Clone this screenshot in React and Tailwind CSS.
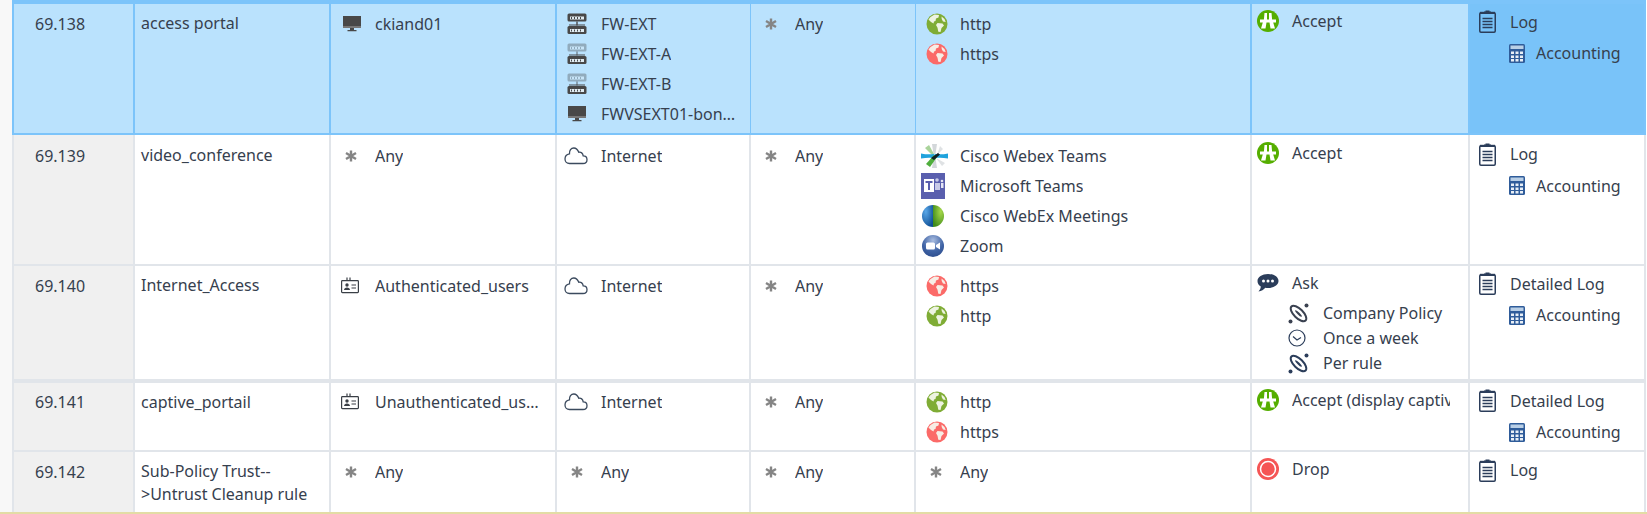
import React from "react";

const Monitor = () => (
  <svg width="20" height="18" viewBox="0 0 20 18">
    <path d="M1 1h18v10H1z" fill="#484848" />
    <path d="M1 11h18v2H1z" fill="#777" />
    <path d="M8 13h4v2H8zM5.500 15h9v1.200h-9z" fill="#484848" />
  </svg>
);
const GwBox = ({ y, fade }) => (
  <g opacity={fade ? 0.35 : 1}>
    <rect x="0.500" y={y} width="19" height="8" rx="1.500" fill="#484848" />
    <rect x="3" y={y + 3} width="14" height="3" fill="#dfeaf0" />
    <path d={`M4 ${y + 3.5}h1v2h-1zM7 ${y + 3.5}h1v2h-1zM10 ${y + 3.5}h1v2h-1zM13 ${y + 3.5}h1v2h-1z`} fill="#484848" />
  </g>
);
const Gateway = ({ fade }) => (
  <svg width="20" height="22" viewBox="0 0 20 22">
    <GwBox y={0.5} fade={fade} />
    <path d="M10 8.500v4" stroke="#484848" strokeWidth="1.400" opacity={fade ? 0.6 : 1} />
    <path d="M2 12h16" stroke="#484848" strokeWidth="1" />
    <GwBox y={13} />
  </svg>
);
const Star = () => (
  <svg width="12" height="12" viewBox="0 0 12 12">
    <path d="M6 0.500v11M1 3l10 6M11 3L1 9" stroke="#858585" strokeWidth="2.400" />
  </svg>
);
const Globe = ({ color }) => (
  <svg width="22" height="22" viewBox="0 0 22 22">
    <circle cx="11" cy="11" r="10.500" fill={color} />
    <path d="M4.500 4l4-2.500 4.500.5-.5 2.500-2.500 1-.5 2.500-1.500.5-.5 2-2.500-1.500-2.500-2.500zM11.500 10l5 .5 1.500 2-2.500 2.500-1 4-2.200-.2-.8-4-1.500-2.800zM15.500 3.500l3 2.500 1.200 3-2.700-.5-1.300-2.500z" fill="#f6f8f0" opacity="0.92" />
  </svg>
);
const Accept = () => (
  <svg width="22" height="22" viewBox="0 0 22 22">
    <circle cx="11" cy="11" r="11" fill="#55ae00" />
    <path d="M7.500 3h2.500v6.500h2V3h2.500l.6 6.500H19v3h-2.800l1.800 6h-4.500l-1-6h-3l-1 6H4l1.800-6H3v-3h3.900z" fill="#fff" />
  </svg>
);
const Drop = () => (
  <svg width="22" height="22" viewBox="0 0 22 22">
    <circle cx="11" cy="11" r="11" fill="#f55555" />
    <circle cx="11" cy="11" r="7.500" fill="none" stroke="#fff" strokeWidth="1.500" />
    <circle cx="11" cy="11" r="5.500" fill="#f55555" />
  </svg>
);
const Clip = () => (
  <svg width="17" height="23" viewBox="0 0 17 23">
    <rect x="0.750" y="2.750" width="15.500" height="19.500" rx="1.200" fill="none" stroke="#2b3d5a" strokeWidth="1.500" />
    <path d="M5 3.500V1.500h1.500V.500h4v1h1.500v2z" fill="#2b3d5a" />
    <path d="M1 1.800h15v2.200H1z" fill="#2b3d5a" />
    <path d="M3.500 8.500h10M3.500 11.500h10M3.500 14.500h10M3.500 17.500h10" stroke="#2b3d5a" strokeWidth="1.300" />
  </svg>
);
const Calc = () => (
  <svg width="16" height="19" viewBox="0 0 16 19">
    <rect x="0" y="0" width="16" height="19" rx="1.500" fill="#2f5c9a" />
    <rect x="1.500" y="1.500" width="13" height="3.500" fill="#b9cfe6" />
    <path d="M2 7.500h3v2.500H2zM6.500 7.500h3v2.500h-3zM11 7.500h3v2.500h-3zM2 11.500h3V14H2zM6.500 11.500h3V14h-3zM11 11.500h3V14h-3zM2 15h3v2.500H2zM6.500 15h3v2.500h-3zM11 15h3v2.500h-3z" fill="#e9eff6" />
  </svg>
);
const Cloud = () => (
  <svg width="24" height="18" viewBox="0 0 24 18">
    <path d="M5.500 16.500H19c2.500 0 4-1.600 4-3.800 0-2.300-1.700-3.800-3.800-3.800-.3-2.800-2.300-4.100-4.400-3.600C13.800 2.800 12 1 9.800 1 7 1 5.200 3.500 5.500 6.800 3 7.200 1 9.300 1 12c0 2.600 2 4.500 4.500 4.500z" fill="none" stroke="#3b4a5e" strokeWidth="1.300" />
  </svg>
);
const Card = () => (
  <svg width="18" height="17" viewBox="0 0 18 17">
    <rect x="0.600" y="3.600" width="16.800" height="12" rx="0.800" fill="none" stroke="#3a3f46" strokeWidth="1.200" />
    <path d="M6 .5v2.500M9 .5v2.500" stroke="#3a3f46" strokeWidth="1.200" />
    <circle cx="6" cy="8" r="1.700" fill="#3a3f46" />
    <path d="M3 13c0-1.800 1.300-2.600 3-2.600s3 .8 3 2.600z" fill="#3a3f46" />
    <path d="M10.500 8h4.500M10.500 11h4.500" stroke="#3a3f46" strokeWidth="1.200" />
  </svg>
);
const Webex = () => (
  <svg width="27" height="26" viewBox="0 0 27 26">
    <path d="M11 1h5l-1.500 10h-2zM11 25h5l-1.500-10h-2z" fill="#d3d7da" />
    <path d="M19 3l3 3-6 6zM24 20l-3 3-6-8z" fill="#dfe2e4" />
    <path d="M4 5l4-3 5 9-1 2z" fill="#a9d39a" />
    <path d="M0 10.500c5 1 9 1 13 .5l1 2-1 2c-4-.5-8-.5-13 .5zM27 10.500c-5 1-9 1-13 .5l-1 2 1 2c4-.5 8-.5 13 .5z" fill="#1fa3dd" />
    <path d="M5 21l8-9 3 2-7 10z" fill="#4fae3c" />
    <path d="M10 15l7-5 2 1.500-6 5.500z" fill="#0f2024" />
  </svg>
);
const Teams = () => (
  <svg width="24" height="26" viewBox="0 0 24 26">
    <rect width="24" height="26" fill="#5a5fae" />
    <rect x="3" y="6" width="10" height="13" fill="#fff" />
    <path d="M4.500 8h7v2H9v7H7v-7H4.500z" fill="#5a5fae" />
    <circle cx="16" cy="7" r="1.800" fill="#c9cbe8" />
    <path d="M14 10h5v7h-5z" fill="#c9cbe8" />
    <circle cx="21" cy="8" r="1.300" fill="#e4e5f4" />
    <path d="M20 10h2.500v5H20z" fill="#e4e5f4" />
  </svg>
);
const Meetings = () => (
  <svg width="24" height="24" viewBox="0 0 24 24">
    <defs>
      <radialGradient id="mb" cx="35%" cy="30%" r="80%">
        <stop offset="0" stopColor="#5aa8e8" />
        <stop offset="1" stopColor="#0d4d94" />
      </radialGradient>
      <radialGradient id="mg" cx="70%" cy="30%" r="80%">
        <stop offset="0" stopColor="#a6d84a" />
        <stop offset="1" stopColor="#3f8a1a" />
      </radialGradient>
    </defs>
    <path d="M12 1a11 11 0 0 0 0 22z" fill="url(#mb)" />
    <path d="M12 1a11 11 0 0 1 0 22z" fill="url(#mg)" />
  </svg>
);
const Zoom = () => (
  <svg width="24" height="24" viewBox="0 0 24 24">
    <defs>
      <radialGradient id="zb" cx="50%" cy="25%" r="80%">
        <stop offset="0" stopColor="#a9bde0" />
        <stop offset="0.600" stopColor="#3f63a5" />
        <stop offset="1" stopColor="#2c4c8c" />
      </radialGradient>
    </defs>
    <circle cx="12" cy="12" r="11" fill="url(#zb)" />
    <rect x="5" y="8.500" width="9" height="7" rx="1.500" fill="#fff" />
    <path d="M15 11l4-2.500v7L15 13z" fill="#fff" />
  </svg>
);
const Bubble = () => (
  <svg width="22" height="20" viewBox="0 0 22 20">
    <path d="M11 1c5.800 0 10.500 3 10.500 7s-4.700 7-10.500 7c-1 0-1.800-.1-2.700-.3C6.800 16.500 4.500 18 1.500 18.500c1.300-1.300 2.200-3 2.300-4.900C1.700 12.300.5 10.300.5 8 .5 4 5.200 1 11 1z" fill="#2b3d5a" />
    <circle cx="6.500" cy="8" r="1.500" fill="#fff" />
    <circle cx="11" cy="8" r="1.500" fill="#fff" />
    <circle cx="15.500" cy="8" r="1.500" fill="#fff" />
  </svg>
);
const Orbit = ({ c = "#3a4150" }) => (
  <svg width="21" height="21" viewBox="0 0 21 21">
    <ellipse cx="10.500" cy="10.500" rx="10" ry="4.600" transform="rotate(45 10.500 10.500)" fill="none" stroke={c} strokeWidth="2" />
    <ellipse cx="10.500" cy="10.500" rx="4.500" ry="1.200" transform="rotate(45 10.500 10.500)" fill={c} />
    <circle cx="18.500" cy="2.500" r="2" fill={c} />
    <circle cx="2.500" cy="18.500" r="2" fill={c} />
  </svg>
);
const Clock = () => (
  <svg width="18" height="18" viewBox="0 0 18 18">
    <circle cx="9" cy="9" r="8" fill="none" stroke="#2b3d5a" strokeWidth="1.200" />
    <path d="M5 7.500L9 11l4-2.500" fill="none" stroke="#2b3d5a" strokeWidth="1.200" />
  </svg>
);

const Line = ({ icon, children, pad = "pl-[10px]", icw = "w-[34px]" }) => (
  <div className={`flex items-center h-[30px] ${pad} pr-2 min-w-0`}>
    <span className={`${icw} shrink-0 flex items-center`}>{icon}</span>
    <span className="truncate min-w-0">{children}</span>
  </div>
);
const Any = () => <Line icon={<span className="pl-[4px] flex"><Star /></span>}>Any</Line>;
const Sv = ({ icon, children }) => <Line icon={icon}>{children}</Line>;
const Wide = ({ icon, children }) => (
  <Line icon={icon} pad="pl-[5px]" icw="w-[39px]">{children}</Line>
);
const Act = ({ icon, children, clip }) => (
  <div className="flex items-center h-[30px] pl-[5px]">
    <span className="w-[35px] shrink-0 flex items-center">{icon}</span>
    <span className={clip ? "w-[158px] overflow-hidden whitespace-nowrap" : "whitespace-nowrap"}>{children}</span>
  </div>
);
const Sub = ({ icon, children }) => (
  <div className="flex items-center h-[25px] pl-[36px]">
    <span className="w-[35px] shrink-0 flex items-center">{icon}</span>
    <span className="whitespace-nowrap">{children}</span>
  </div>
);
const Track = ({ detailed, acct }) => (
  <div className="pt-[3px] -mt-[5px]">
    <div className="flex items-center h-[30px] pl-[9px]">
      <span className="w-[31px] shrink-0 flex items-center"><Clip /></span>
      <span>{detailed ? "Detailed Log" : "Log"}</span>
    </div>
    {acct && (
      <div className="flex items-center h-[33px] pl-[39px]">
        <span className="w-[27px] shrink-0 flex items-center"><Calc /></span>
        <span>Accounting</span>
      </div>
    )}
  </div>
);

const cols = "grid grid-cols-[12px_123px_196px_226px_194px_165px_336px_218px_176px_1px]";

const pads = {
  base: { num: "pt-[5px]", name: "pt-[8px]", mid: "pt-[5px]", act: "pt-[2px]", trk: "pt-[5px]" },
  down: { num: "pt-[6px]", name: "pt-[9px]", mid: "pt-[6px]", act: "pt-[3px]", trk: "pt-[6px]" },
  up: { num: "pt-[4px]", name: "pt-[8px]", mid: "pt-[4px]", act: "pt-[2px]", trk: "pt-[5px]" },
};

function Row({ cells, h, sel, border = "border-b-2", dy = "base" }) {
  const line = sel ? "border-[#7cc4fa]" : "border-[#e1e5ea]";
  const bg = sel ? "bg-[#bae2fd]" : "bg-white";
  const p = pads[dy];
  return (
    <div className={`${cols} ${h}`}>
      <div className="bg-[#f8f8f8]" />
      <div className={`${sel ? "bg-[#bae2fd]" : "bg-[#f0f0f0]"} border-l-[2px] ${line} border-r-2 ${border} pl-[21px] ${p.num} leading-[30px]`}>{cells[0]}</div>
      <div className={`${bg} ${line} border-r-2 ${border} pl-[6px] pr-2 ${p.name} leading-[23px]`}>{cells[1]}</div>
      <div className={`${bg} ${line} border-r-2 ${border} ${p.mid} min-w-0`}>{cells[2]}</div>
      <div className={`${bg} ${line} ${sel ? "border-r" : "border-r-2"} ${border} ${p.mid} min-w-0`}>{cells[3]}</div>
      <div className={`${bg} ${line} ${sel ? "border-r" : "border-r-2"} ${border} ${p.mid} min-w-0`}>{cells[4]}</div>
      <div className={`${bg} ${line} border-r-2 ${border} ${p.mid} min-w-0`}>{cells[5]}</div>
      <div className={`${bg} ${line} border-r-2 ${border} ${p.act} min-w-0`}>{cells[6]}</div>
      <div className={`${sel ? "bg-[#79c3f9]" : "bg-white"} ${line} border-r-2 ${border} ${p.trk} min-w-0`}>{cells[7]}</div>
      <div className="bg-white" />
    </div>
  );
}

export default function App() {
  return (
    <div className="h-[514px] w-[1647px] overflow-hidden bg-white text-[16px] text-[#36404e] font-['Noto_Sans','Open_Sans',sans-serif] flex flex-col">
      <div className={`${cols} h-[4px]`}>
        <div className="bg-[#f8f8f8]" />
        <div className="col-span-8 bg-[#7cc4fa]" />
        <div />
      </div>
      <Row
        sel
        h="h-[132px]"
        cells={[
          "69.138",
          "access portal",
          <Line icon={<Monitor />} pad="pl-[11px]" icw="w-[33px]">ckiand01</Line>,
          <>
            <Sv icon={<Gateway />}>FW-EXT</Sv>
            <Sv icon={<Gateway fade />}>FW-EXT-A</Sv>
            <Sv icon={<Gateway fade />}>FW-EXT-B</Sv>
            <Sv icon={<Monitor />}>FWVSEXT01-bond0.100</Sv>
          </>,
          <Any />,
          <>
            <Sv icon={<Globe color="#7fac35" />}>http</Sv>
            <Sv icon={<Globe color="#fb6a68" />}>https</Sv>
          </>,
          <Act icon={<Accept />}>Accept</Act>,
          <Track acct />,
        ]}
      />
      <Row
        h="h-[131px]"
        dy="down"
        cells={[
          "69.139",
          "video_conference",
          <Any />,
          <Line icon={<Cloud />} pad="pl-[7px]" icw="w-[37px]">Internet</Line>,
          <Any />,
          <>
            <Wide icon={<Webex />}>Cisco Webex Teams</Wide>
            <Wide icon={<Teams />}>Microsoft Teams</Wide>
            <Wide icon={<Meetings />}>Cisco WebEx Meetings</Wide>
            <Wide icon={<Zoom />}>Zoom</Wide>
          </>,
          <Act icon={<Accept />}>Accept</Act>,
          <Track acct />,
        ]}
      />
      <Row
        h="h-[117px]"
        border="border-b-[4px]"
        cells={[
          "69.140",
          "Internet_Access",
          <Line icon={<Card />}>Authenticated_users</Line>,
          <Line icon={<Cloud />} pad="pl-[7px]" icw="w-[37px]">Internet</Line>,
          <Any />,
          <>
            <Sv icon={<Globe color="#fb6a68" />}>https</Sv>
            <Sv icon={<Globe color="#7fac35" />}>http</Sv>
          </>,
          <>
            <Act icon={<Bubble />}>Ask</Act>
            <div className="mt-[3px]">
              <Sub icon={<Orbit />}>Company Policy</Sub>
              <Sub icon={<Clock />}>Once a week</Sub>
              <Sub icon={<Orbit c="#2b3d5a" />}>Per rule</Sub>
            </div>
          </>,
          <Track detailed acct />,
        ]}
      />
      <Row
        h="h-[70px]"
        dy="up"
        cells={[
          "69.141",
          "captive_portail",
          <Line icon={<Card />}>Unauthenticated_users_group</Line>,
          <Line icon={<Cloud />} pad="pl-[7px]" icw="w-[37px]">Internet</Line>,
          <Any />,
          <>
            <Sv icon={<Globe color="#7fac35" />}>http</Sv>
            <Sv icon={<Globe color="#fb6a68" />}>https</Sv>
          </>,
          <Act icon={<Accept />} clip>Accept (display captive portal)</Act>,
          <Track detailed acct />,
        ]}
      />
      <Row
        h="h-[60px]"
        border="border-b-0"
        cells={[
          "69.142",
          <>Sub-Policy Trust--<br />&gt;Untrust Cleanup rule</>,
          <Any />,
          <Any />,
          <Any />,
          <Any />,
          <Act icon={<Drop />}>Drop</Act>,
          <Track />,
        ]}
      />
      <div className="h-[2px] bg-[#e3dca5]" />
    </div>
  );
}
